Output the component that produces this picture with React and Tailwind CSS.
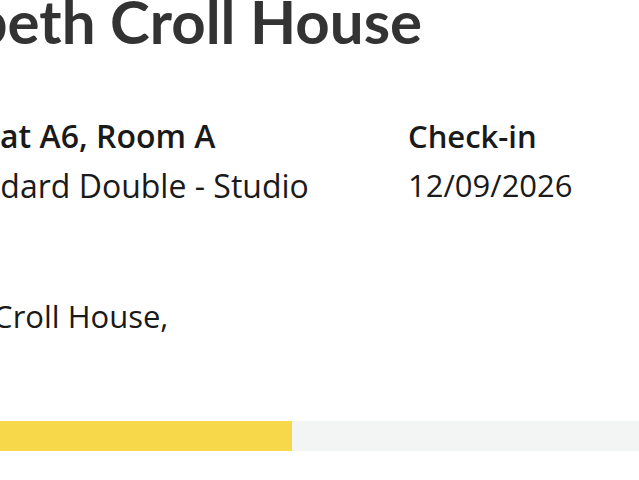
import React from 'react';

function App() {
  return (
    <div className="w-[639px] h-[480px] overflow-hidden bg-white">
      <div className="-ml-[149px]">
        <h1 className="font-['Lato',sans-serif] font-bold text-[60px] leading-[48px] text-[#333333] -mt-[3px]">
          Elizabeth Croll House
        </h1>
      </div>
      <div className="flex mt-[73px] font-['Open_Sans',sans-serif] leading-[36px] text-[#1a1a1a]">
        <div className="w-[408px] shrink-0 text-[32px]">
          <div className="font-semibold -ml-[26px]">Flat A6, Room A</div>
          <div className="mt-[14px] -ml-[66px]">Standard Double - Studio</div>
        </div>
        <div className="text-[31px]">
          <div className="font-semibold">Check-in</div>
          <div className="mt-[13px]">12/09/2026</div>
        </div>
      </div>
      <div className="font-['Open_Sans',sans-serif] text-[31px] text-[#1a1a1a] leading-[36px] mt-[94px] -ml-[146px]">
        Elizabeth Croll House,
      </div>
      <div className="flex h-[30px] mt-[87px] bg-[#f3f4f4]">
        <div className="w-[292px] bg-[#f7d84a]" />
      </div>
    </div>
  );
}

export default App;
